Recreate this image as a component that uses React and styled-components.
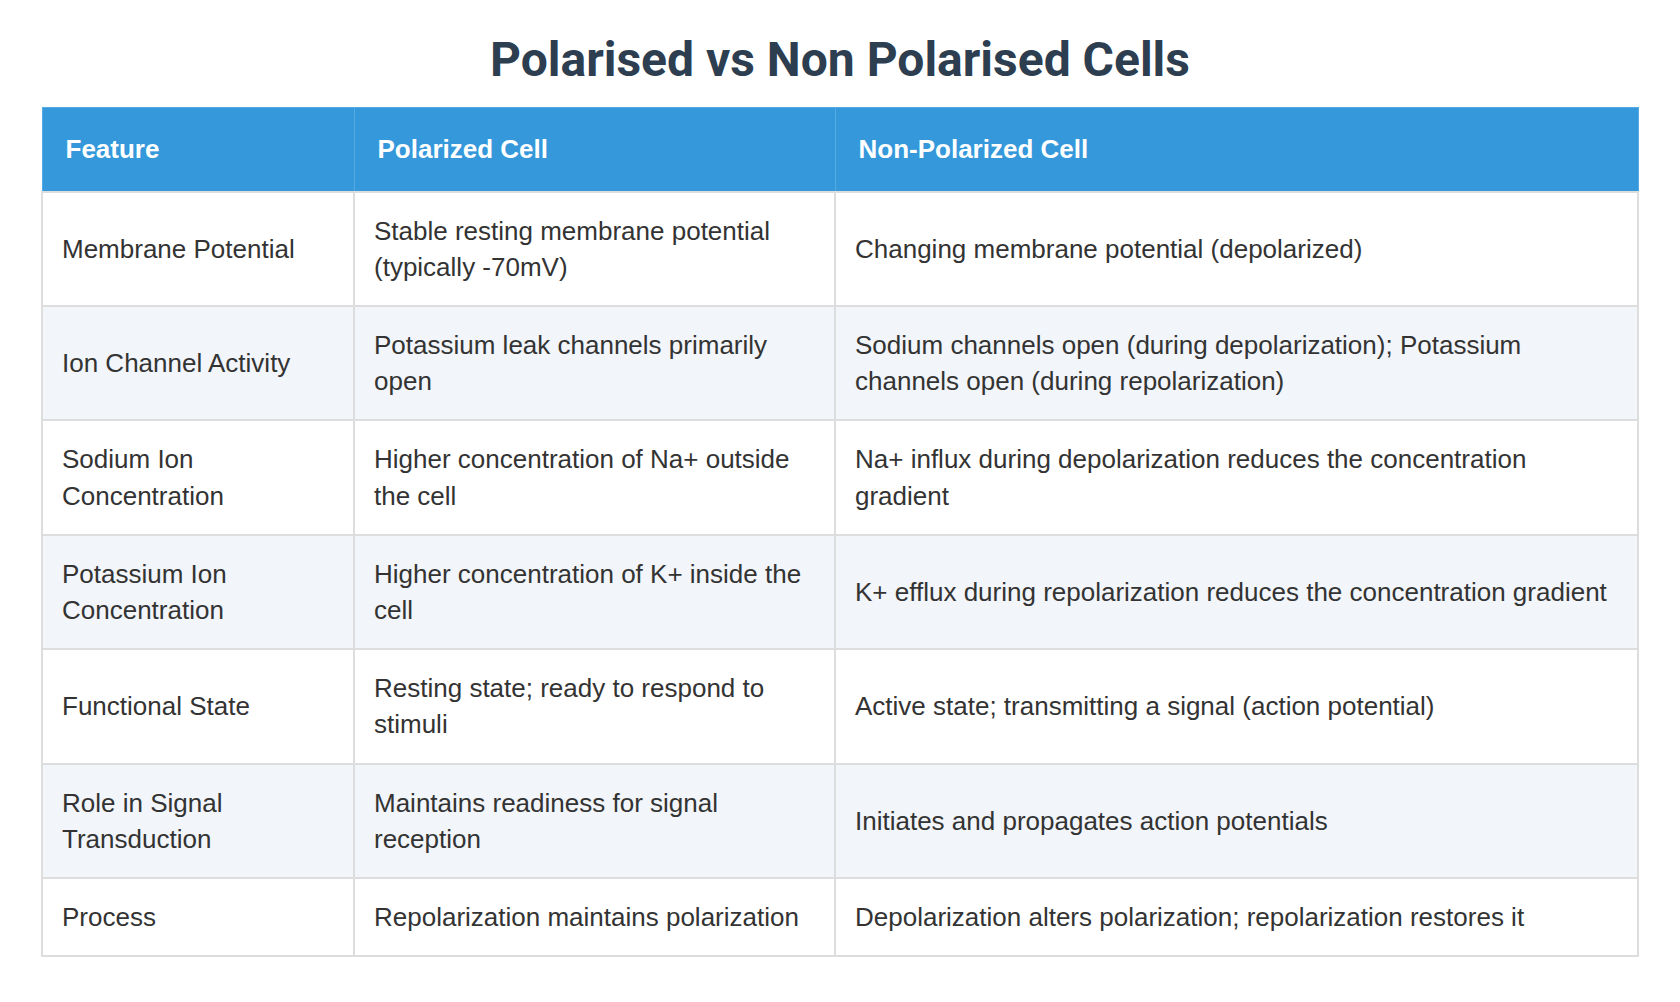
import React from "react";
import styled, { createGlobalStyle } from "styled-components";

const GlobalStyle = createGlobalStyle`
  html, body {
    margin: 0;
    padding: 0;
    background: #ffffff;
  }
`;

const Page = styled.div`
  padding: 31px 41px 40px;
  font-family: "Liberation Sans", Arial, sans-serif;
  color: #333333;
`;

const Title = styled.h1`
  margin: 0 0 18px;
  font-family: Roboto, "Liberation Sans", sans-serif;
  font-weight: 700;
  font-size: 48px;
  line-height: 57.6px;
  text-align: center;
  color: #2c3e50;
`;

const Table = styled.table`
  width: 100%;
  table-layout: fixed;
  border-collapse: collapse;
  font-size: 26px;
  line-height: 36.2px;
`;

const HeadCell = styled.th`
  background: #3498db;
  color: #ffffff;
  font-weight: 700;
  text-align: left;
  padding: 23.4px 23px;
  border: 1px solid #56aae4;
`;

const Row = styled.tr`
  background: ${props => (props.striped ? "#f2f5f9" : "#ffffff")};
`;

const Cell = styled.td`
  padding: 20px 19px;
  border: 2px solid #dddddd;
  vertical-align: middle;
`;

const rows = [
  [
    "Membrane Potential",
    "Stable resting membrane potential (typically -70mV)",
    "Changing membrane potential (depolarized)",
  ],
  [
    "Ion Channel Activity",
    "Potassium leak channels primarily open",
    "Sodium channels open (during depolarization); Potassium channels open (during repolarization)",
  ],
  [
    "Sodium Ion Concentration",
    "Higher concentration of Na+ outside the cell",
    "Na+ influx during depolarization reduces the concentration gradient",
  ],
  [
    "Potassium Ion Concentration",
    "Higher concentration of K+ inside the cell",
    "K+ efflux during repolarization reduces the concentration gradient",
  ],
  [
    "Functional State",
    "Resting state; ready to respond to stimuli",
    "Active state; transmitting a signal (action potential)",
  ],
  [
    "Role in Signal Transduction",
    "Maintains readiness for signal reception",
    "Initiates and propagates action potentials",
  ],
  [
    "Process",
    "Repolarization maintains polarization",
    "Depolarization alters polarization; repolarization restores it",
  ],
];

export default function App() {
  return (
    <>
      <GlobalStyle />
      <Page>
        <Title>Polarised vs Non Polarised Cells</Title>
        <Table>
          <colgroup>
            <col style={{ width: 312 }} />
            <col style={{ width: 481 }} />
            <col />
          </colgroup>
          <thead>
            <tr>
              <HeadCell>Feature</HeadCell>
              <HeadCell>Polarized Cell</HeadCell>
              <HeadCell>Non-Polarized Cell</HeadCell>
            </tr>
          </thead>
          <tbody>
            {rows.map((row, i) => (
              <Row key={row[0]} striped={i % 2 === 1}>
                {row.map(text => (
                  <Cell key={text}>{text}</Cell>
                ))}
              </Row>
            ))}
          </tbody>
        </Table>
      </Page>
    </>
  );
}
